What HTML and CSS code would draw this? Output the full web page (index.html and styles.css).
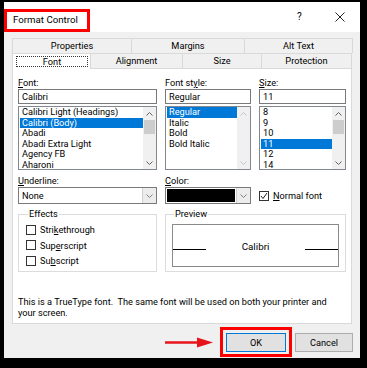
FILE: index.html
```html
<!DOCTYPE html>
<html>
<head>
<meta charset="utf-8">
<link rel="stylesheet" href="styles.css">
</head>
<body>
<div class="dialog">
  <div class="titlebar">
    <div class="title-box">Format Control</div>
    <span class="help">?</span>
    <span class="close"><svg width="10" height="10" viewBox="0 0 10 10"><path d="M0.5 0.5L9.5 9.5M9.5 0.5L0.5 9.5" stroke="#222" stroke-width="1" fill="none"/></svg></span>
  </div>

  <div class="tabs">
    <div class="tabrow">
      <div class="tab t-props">Properties</div>
      <div class="tab t-margins">Margins</div>
      <div class="tab t-alt">Alt Text</div>
    </div>
    <div class="tabrow">
      <div class="tab t-font active"><span class="focus">Font</span></div>
      <div class="tab t-align">Alignment</div>
      <div class="tab t-size">Size</div>
      <div class="tab t-prot">Protection</div>
    </div>
  </div>

  <div class="panel">
    <div class="fields">
      <div class="lbl"><u>F</u>ont:</div>
      <div class="lbl">Font st<u>y</u>le:</div>
      <div class="lbl"><u>S</u>ize:</div>

      <div class="input">Calibri</div>
      <div class="input">Regular</div>
      <div class="input">11</div>

      <div class="list">
        <div class="items">
          <div class="item">Calibri Light (Headings)</div>
          <div class="item sel">Calibri (Body)</div>
          <div class="item">Abadi</div>
          <div class="item">Abadi Extra Light</div>
          <div class="item">Agency FB</div>
          <div class="item">Aharoni</div>
        </div>
        <div class="sbar">
          <svg class="arr" width="7" height="4" viewBox="0 0 7 4"><path d="M0.5 3.5L3.5 0.5L6.5 3.5" stroke="#606060" fill="none"/></svg>
          <div class="thumb"></div>
          <svg class="arr down" width="7" height="4" viewBox="0 0 7 4"><path d="M0.5 0.5L3.5 3.5L6.5 0.5" stroke="#606060" fill="none"/></svg>
        </div>
      </div>
      <div class="list">
        <div class="items">
          <div class="item sel">Regular</div>
          <div class="item">Italic</div>
          <div class="item">Bold</div>
          <div class="item">Bold Italic</div>
        </div>
        <div class="sbar">
          <svg class="arr" width="7" height="4" viewBox="0 0 7 4"><path d="M0.5 3.5L3.5 0.5L6.5 3.5" stroke="#c4c4c4" fill="none"/></svg>
          <div class="nothumb"></div>
          <svg class="arr down" width="7" height="4" viewBox="0 0 7 4"><path d="M0.5 0.5L3.5 3.5L6.5 0.5" stroke="#c4c4c4" fill="none"/></svg>
        </div>
      </div>
      <div class="list">
        <div class="items">
          <div class="item">8</div>
          <div class="item">9</div>
          <div class="item">10</div>
          <div class="item sel">11</div>
          <div class="item">12</div>
          <div class="item">14</div>
        </div>
        <div class="sbar">
          <svg class="arr" width="7" height="4" viewBox="0 0 7 4"><path d="M0.5 3.5L3.5 0.5L6.5 3.5" stroke="#606060" fill="none"/></svg>
          <div class="thumb"></div>
          <svg class="arr down" width="7" height="4" viewBox="0 0 7 4"><path d="M0.5 0.5L3.5 3.5L6.5 0.5" stroke="#606060" fill="none"/></svg>
        </div>
      </div>

      <div class="lbl lbl2"><u>U</u>nderline:</div>
      <div class="lbl lbl2"><u>C</u>olor:</div>
      <div class="lbl lbl2"></div>

      <div class="dropdown">
        <div class="dd-val">None</div>
        <div class="dd-btn"><svg width="7" height="4" viewBox="0 0 7 4"><path d="M0.5 0.5L3.5 3.5L6.5 0.5" stroke="#808080" fill="none"/></svg></div>
      </div>
      <div class="dropdown">
        <div class="dd-val"><div class="swatch"></div></div>
        <div class="dd-btn"><svg width="7" height="4" viewBox="0 0 7 4"><path d="M0.5 0.5L3.5 3.5L6.5 0.5" stroke="#808080" fill="none"/></svg></div>
      </div>
      <div class="normal">
        <span class="cb"><svg width="8" height="8" viewBox="0 0 8 8"><path d="M1 4L3 6.5L7 1" stroke="#222" stroke-width="1" fill="none"/></svg></span>
        <span><u>N</u>ormal font</span>
      </div>

      <fieldset class="group effects">
        <legend>Effects</legend>
        <div class="chk"><span class="cb"></span><span>Stri<u>k</u>ethrough</span></div>
        <div class="chk"><span class="cb"></span><span>Sup<u>e</u>rscript</span></div>
        <div class="chk"><span class="cb"></span><span>Su<u>b</u>script</span></div>
      </fieldset>
      <fieldset class="group preview">
        <legend>Preview</legend>
        <div class="pbox">
          <div class="bline"></div>
          <div class="ptext">Calibri</div>
          <div class="bline"></div>
        </div>
      </fieldset>
    </div>
    <div class="note">This is a TrueType font.&nbsp; The same font will be used on both your printer and<br>your screen.</div>
  </div>

  <div class="buttons">
    <svg class="arrow" width="48" height="11" viewBox="0 0 48 11"><path d="M0 5.5H36" stroke="#e8141b" stroke-width="2.4"/><polygon points="32,0.5 48,5.5 32,10.5" fill="#e8141b"/></svg>
    <div class="ok-wrap"><div class="btn ok">OK</div></div>
    <div class="btn cancel">Cancel</div>
  </div>
</div>
</body>
</html>
```

FILE: styles.css
```css
* { box-sizing: border-box; }
html, body { margin: 0; padding: 0; }
body {
  width: 367px; height: 368px; overflow: hidden;
  background: #000;
  font-family: Roboto, "Open Sans", sans-serif;
  font-size: 9.2px;
  color: #000;
}
.dialog {
  margin: 2px 0 0 4px;
  width: 356px; height: 356px;
  background: #f0f0f0;
}
.titlebar {
  height: 30px; background: #fff;
  display: flex; align-items: flex-end;
}
.title-box {
  width: 86px; height: 23px;
  border: 3px solid #f00;
  padding: 0 0 3px 6px;
  display: flex; align-items: center;
  font-size: 9.7px;
}
.help {
  align-self: center;
  margin-left: auto;
  font-size: 10px;
  width: 10px;
  margin-right: 28px;
  margin-bottom: 1px;
}
.close {
  align-self: center;
  display: flex;
  margin-right: 15px;
}
.tabs { margin: 6px 0 0 8px; width: 340px; }
.tabrow { display: flex; height: 15px; }
.tab {
  display: flex; align-items: center; justify-content: center;
  border: 1px solid #d9d9d9; border-bottom: none;
  margin-right: -1px;
  line-height: 1;
}
.t-props { width: 120px; }
.t-margins { width: 114px; }
.t-alt { width: 109px; }
.t-font { width: 79px; }
.t-align { width: 93px; }
.t-size { width: 80px; }
.t-prot { width: 91px; }
.tab.active {
  background: #fff;
  position: relative; z-index: 1;
  height: 16px;
  padding: 2px 2px 2px 3px;
}
.focus {
  display: flex; align-items: center; justify-content: center;
  width: 100%; height: 11px;
  border: 1px dotted #333;
}
.panel {
  margin-left: 8px;
  width: 340px; height: 256px;
  background: #fff;
  border: 1px solid #d9d9d9;
  padding: 7px 0 0 5px;
}
.fields {
  display: grid;
  grid-template-columns: 139px 86px 87px;
  column-gap: 8px;
}
.lbl { height: 13px; line-height: 13px; }
.lbl2 { margin-top: 4px; }
.input {
  height: 15px; border: 1px solid #7a7a7a;
  padding-left: 3px; line-height: 13px;
}
.list {
  margin-top: 2px; height: 64px;
  border: 1px solid #828790;
  display: flex; overflow: hidden;
}
.items { flex: 1; padding: 0 0 0 1px; }
.item { height: 10.5px; line-height: 10.5px; padding-left: 2px; white-space: nowrap; }
.item.sel { background: #0078d7; color: #fff; }
.sbar {
  width: 13px; background: #f0f0f0;
  display: flex; flex-direction: column; align-items: center;
}
.arr { margin-top: 5px; flex: none; }
.arr.down { margin-top: auto; margin-bottom: 4px; }
.thumb { width: 11px; height: 14px; background: #cdcdcd; margin-top: 4px; }
.nothumb { height: 0; }
.dropdown {
  height: 17px; border: 1px solid #7a7a7a;
  display: flex;
}
.dd-val { flex: 1; padding-left: 3px; line-height: 15px; }
.dd-btn {
  width: 14px; background: #ececec;
  border-left: 1px solid #cfcfcf;
  display: flex; align-items: center; justify-content: center;
}
.swatch { margin: 1px 1px 0 -2px; height: 13px; background: #000; }
.normal { display: flex; align-items: center; height: 17px; }
.cb {
  width: 10px; height: 10px; border: 1px solid #333;
  display: flex; align-items: center; justify-content: center;
  margin-right: 4px; flex: none; background: #fff;
}
.group {
  margin: 4px 0 0 0; padding: 2px 0 0 7px;
  border: 1px solid #dcdcdc;
  height: 64px; min-width: 0;
}
.group legend {
  padding: 0 1px; margin-left: 2px;
  line-height: 12px; height: 12px;
}
.preview { grid-column: span 2; padding: 0 0 0 6px; }
.chk { display: flex; align-items: center; height: 15.5px; }
.pbox {
  margin-top: 4px;
  width: 167px; height: 43px;
  border: 1px solid #8a8a8a;
  display: flex; align-items: flex-end;
  padding-bottom: 16px;
}
.bline { flex: 1; border-bottom: 1px solid #000; }
.ptext {
  width: 99px; text-align: center;
  font-size: 9.8px;
  line-height: 11px; margin-bottom: -2px;
}
.note { margin-top: 25px; line-height: 10.8px; white-space: nowrap; }
.buttons {
  display: flex; justify-content: flex-end; align-items: flex-start;
  padding-right: 7px;
}
.arrow { margin: 13px 7px 0 0; }
.ok-wrap {
  margin-top: 3px;
  border: 3px solid #f00;
  padding: 3px 3px 2px 3px;
}
.btn {
  height: 19px;
  background: #e1e1e1; border: 1px solid #adadad;
  display: flex; align-items: center; justify-content: center;
}
.ok { width: 60px; border-color: #0078d7; }
.cancel { width: 58px; margin: 9px 0 0 3px; }
```
